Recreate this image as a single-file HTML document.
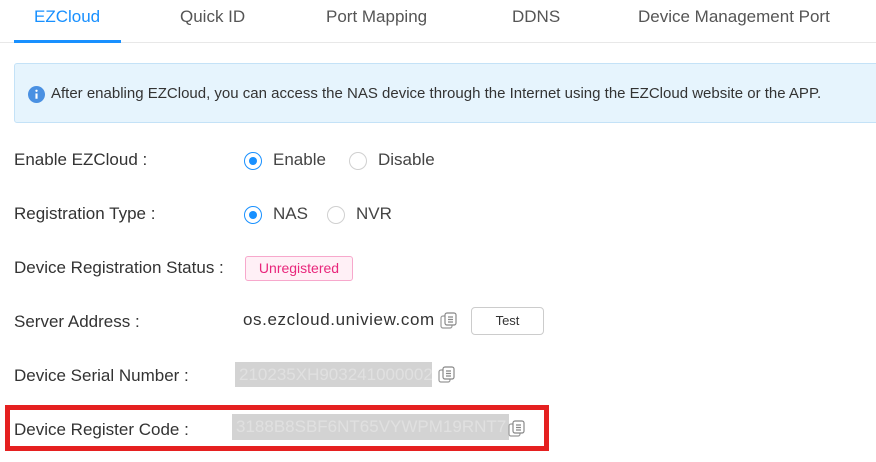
<!DOCTYPE html>
<html><head><meta charset="utf-8"><style>
body{margin:0;width:876px;height:462px;background:#fff;font-family:"Liberation Sans",sans-serif;position:relative;overflow:hidden;color:#333}
.a{position:absolute;white-space:nowrap}
.tab{font-size:17px;color:#555;top:7px}
.lbl{font-size:17px;color:#333;left:14px}
.r{position:absolute;width:18px;height:18px;border:1px solid #d0d0d0;border-radius:50%;box-sizing:border-box;background:#fff}
.r.on{border:1.5px solid #1890ff}
.r.on::after{content:"";position:absolute;left:3.5px;top:3.5px;width:8px;height:8px;border-radius:50%;background:#1890ff}
.opt{font-size:17px;color:#444}
.cp{position:absolute;width:18px;height:18px}
.gray{position:absolute;background:#d3d3d3;color:#e0e0e0;font-size:17px;line-height:25px;padding-left:4px;box-sizing:border-box;overflow:hidden}
</style></head><body>
<div class="a tab" style="left:34px;color:#1890ff">EZCloud</div>
<div class="a tab" style="left:180px">Quick ID</div>
<div class="a tab" style="left:326px">Port Mapping</div>
<div class="a tab" style="left:512px">DDNS</div>
<div class="a tab" style="left:638px">Device Management Port</div>
<div class="a" style="left:0;top:42px;width:876px;height:1px;background:#e8e8e8"></div>
<div class="a" style="left:14px;top:40px;width:107px;height:3px;background:#1890ff"></div>
<div class="a" style="left:14px;top:63px;width:870px;height:60px;background:#e6f4fd;border:1px solid #c4e2f7;border-radius:3px;box-sizing:border-box"></div>
<svg class="a" style="left:28px;top:86px" width="17" height="17" viewBox="0 0 16 16"><circle cx="8" cy="8" r="8" fill="#4a90e2"/><rect x="7" y="7" width="2" height="5" fill="#fff"/><circle cx="8" cy="4.5" r="1.1" fill="#fff"/></svg>
<div class="a" style="left:51px;top:85px;font-size:15px;color:#333">After enabling EZCloud, you can access the NAS device through the Internet using the EZCloud website or the APP.</div>

<div class="a lbl" style="top:150px">Enable EZCloud :</div>
<div class="r on" style="left:244px;top:152px"></div><div class="a opt" style="left:273px;top:150px">Enable</div>
<div class="r" style="left:349px;top:152px"></div><div class="a opt" style="left:378px;top:150px">Disable</div>

<div class="a lbl" style="top:204px">Registration Type :</div>
<div class="r on" style="left:244px;top:206px"></div><div class="a opt" style="left:273px;top:204px">NAS</div>
<div class="r" style="left:327px;top:206px"></div><div class="a opt" style="left:356px;top:204px">NVR</div>

<div class="a lbl" style="top:258px">Device Registration Status :</div>
<div class="a" style="left:245px;top:256px;width:108px;height:25px;border:1px solid #f7a8cc;background:#fff0f6;border-radius:3px;box-sizing:border-box;color:#e8267b;font-size:14px;text-align:center;line-height:23px">Unregistered</div>

<div class="a lbl" style="top:312px">Server Address :</div>
<div class="a" style="left:243px;top:310px;font-size:17px;color:#333;letter-spacing:0.6px">os.ezcloud.uniview.com</div>
<svg class="cp" style="left:440px;top:312px" viewBox="0 0 18 18"><rect x="1" y="4" width="11" height="12" rx="2" fill="#fff" stroke="#999" stroke-width="1.2"/><rect x="5" y="1" width="11" height="12" rx="2" fill="#fff" stroke="#888" stroke-width="1.2"/><path d="M8 5h5M8 7.5h5M8 10h5" stroke="#888" stroke-width="1.2"/></svg>
<div class="a" style="left:471px;top:307px;width:73px;height:28px;border:1px solid #ccc;border-radius:4px;box-sizing:border-box;font-size:13px;text-align:center;line-height:26px;color:#333">Test</div>

<div class="a lbl" style="top:366px">Device Serial Number :</div>
<div class="gray" style="left:235px;top:362px;width:197px;height:25px">210235XH903241000002</div>
<svg class="cp" style="left:438px;top:366px" viewBox="0 0 18 18"><rect x="1" y="4" width="11" height="12" rx="2" fill="#fff" stroke="#999" stroke-width="1.2"/><rect x="5" y="1" width="11" height="12" rx="2" fill="#fff" stroke="#888" stroke-width="1.2"/><path d="M8 5h5M8 7.5h5M8 10h5" stroke="#888" stroke-width="1.2"/></svg>

<div class="a" style="left:5px;top:405px;width:544px;height:46px;border:5px solid #e52020;box-sizing:border-box"></div>
<div class="a lbl" style="top:420px">Device Register Code :</div>
<div class="gray" style="left:232px;top:414px;width:277px;height:26px">3188B8SBF6NT65VYWPM19RNT7</div>
<svg class="cp" style="left:508px;top:420px" viewBox="0 0 18 18"><rect x="1" y="4" width="11" height="12" rx="2" fill="#fff" stroke="#999" stroke-width="1.2"/><rect x="5" y="1" width="11" height="12" rx="2" fill="#fff" stroke="#888" stroke-width="1.2"/><path d="M8 5h5M8 7.5h5M8 10h5" stroke="#888" stroke-width="1.2"/></svg>
</body></html>
